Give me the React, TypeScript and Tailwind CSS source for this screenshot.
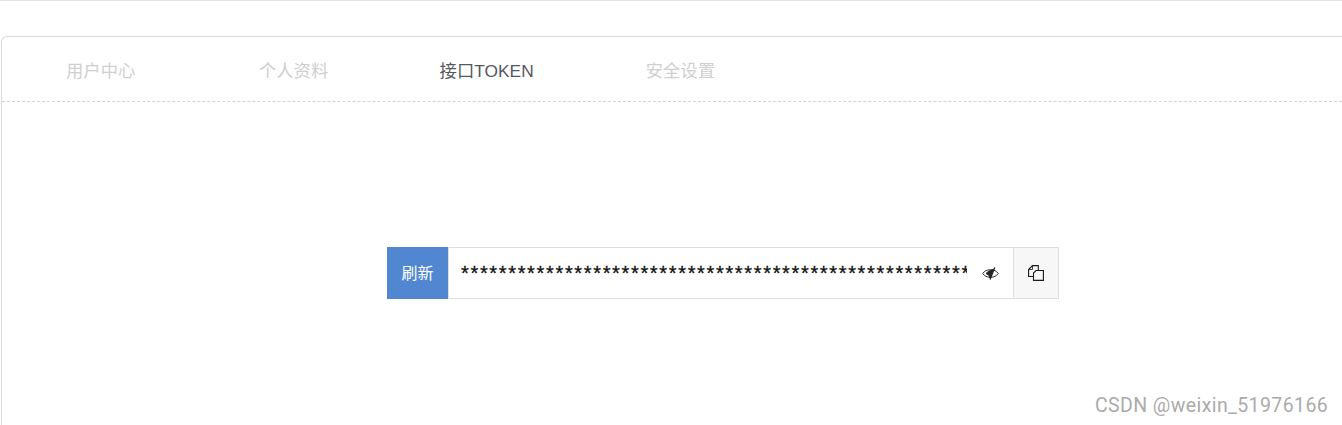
const font = { fontFamily: '"Liberation Sans", "Noto Sans CJK SC", sans-serif' }

function EyeOff() {
  return (
    <svg width="17" height="13" viewBox="0 0 17 13" fill="none" stroke="#333" strokeWidth="1">
      <path d="M.7 6.500C2.500 4 5 2.700 8.500 2.700s6 1.300 7.800 3.800c-1.800 2.500-4.300 3.800-7.800 3.800S2.500 9 .7 6.500z" />
      <path d="M4 6.500C5.500 4.800 8 3.500 11.300 2.400L7.800 10.800 6.800 8 4 6.500z" fill="#222" stroke="#222" />
      <path d="M12.800 .6L8 12.400" strokeWidth="1.300" stroke="#222" />
    </svg>
  )
}

function CopyIcon() {
  return (
    <svg width="16" height="16" viewBox="0 0 16 16" fill="none" stroke="#1a1a1a" strokeWidth="1.100">
      <path d="M5 11.500H.6V4.500L4.500 .6h5.800V5" />
      <path d="M5.500 15.400V8L8 5.500h7.400v9.900z" />
      <path d="M4.500 .6V4.500H.6" strokeWidth=".8" />
    </svg>
  )
}

export default function App() {
  return (
    <div className="relative h-[425px] w-[1342px] overflow-hidden bg-white" style={font}>
      <div className="h-[1px] bg-[#e2e2e2]" />
      <div className="ml-[1px] mt-[35px] h-[400px] rounded-tl-[6px] border-l border-t border-[#dcdcdc]">
        <div className="flex h-[65px] items-center border-b border-dashed border-[#d4d4d4] pt-[6px] text-[17.33px] text-[#cfcfcf]">
          <span className="ml-[64px]">用户中心</span>
          <span className="ml-[123.6px]">个人资料</span>
          <span className="ml-[111.4px] text-[#55595f]">接口TOKEN</span>
          <span className="ml-[112px]">安全设置</span>
        </div>
        <div className="ml-[385px] mt-[145px] flex h-[52px] w-[672px]">
          <button className="w-[61px] bg-[#5087d0] pt-[1px] text-[16px] text-white">刷新</button>
          <div className="flex flex-1 items-center border-y border-l border-[#dedede] pl-[12px] pr-[13px]">
            <input
              readOnly
              value={'*'.repeat(70)}
              className="w-[506px] bg-transparent text-[20px] leading-none font-normal text-[#111] outline-none [letter-spacing:1.66px] [-webkit-text-stroke:0.3px_#111]"
            />
            <div className="ml-[15px] flex">
              <EyeOff />
            </div>
          </div>
          <div className="flex w-[46px] items-center justify-center border border-[#dedede] bg-[#f7f7f7]">
            <CopyIcon />
          </div>
        </div>
      </div>
      <div className="absolute left-[1095px] top-[395px] text-[19.5px] leading-[22px] tracking-[0.4px] text-[#ababab]" style={{ fontFamily: 'Roboto, sans-serif' }}>
        CSDN @weixin_51976166
      </div>
    </div>
  )
}
